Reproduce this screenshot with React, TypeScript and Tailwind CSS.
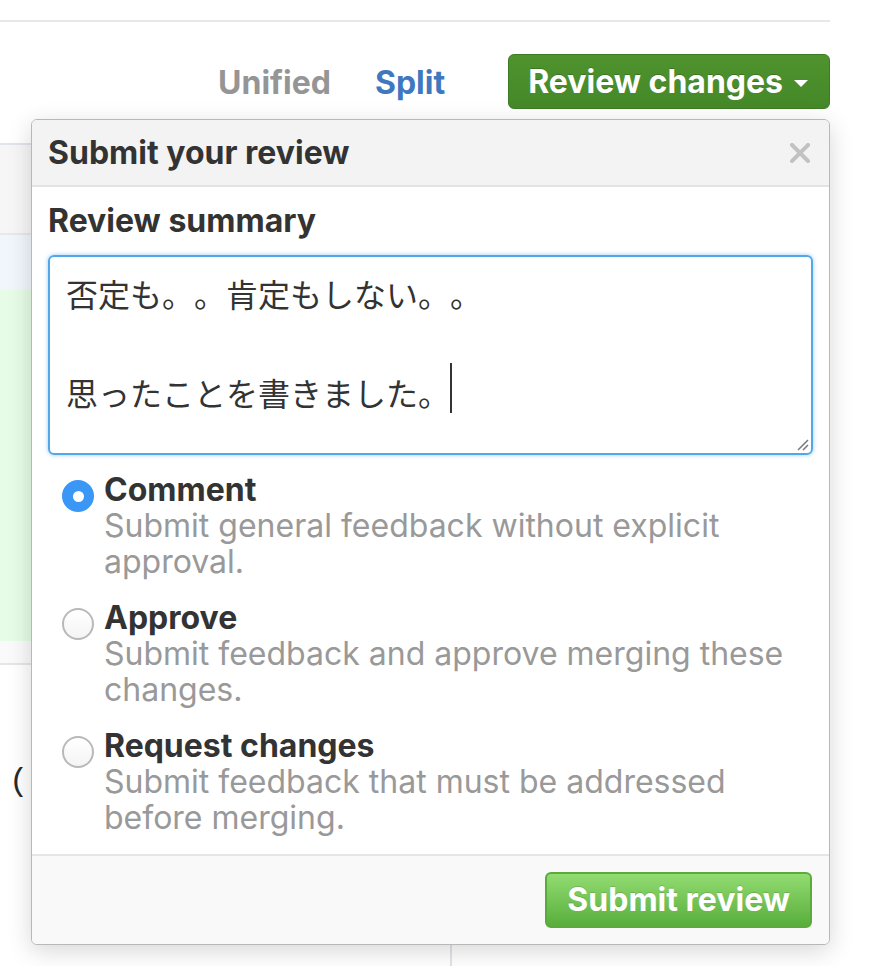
import { useState } from 'react';

type Choice = 'comment' | 'approve' | 'reject';

const options: { id: Choice; title: string; note: string }[] = [
  { id: 'comment', title: 'Comment', note: 'Submit general feedback without explicit approval.' },
  { id: 'approve', title: 'Approve', note: 'Submit feedback and approve merging these changes.' },
  { id: 'reject', title: 'Request changes', note: 'Submit feedback that must be addressed before merging.' },
];

function Radio({ checked }: { checked: boolean }) {
  if (checked) {
    return (
      <span className="mt-[8px] flex h-[32px] w-[32px] shrink-0 items-center justify-center rounded-full bg-[#3b97f6]">
        <span className="h-[11px] w-[11px] rounded-full bg-white" />
      </span>
    );
  }
  return (
    <span className="mt-[8px] h-[32px] w-[32px] shrink-0 rounded-full border-2 border-[#b9b9b9] bg-gradient-to-b from-white to-[#f4f4f4]" />
  );
}

export default function App() {
  const [choice, setChoice] = useState<Choice>('comment');

  return (
    <div className="relative h-[966px] w-[876px] overflow-hidden bg-white font-['Inter','Liberation_Sans',sans-serif] text-[#333]">
      {/* page behind the popover */}
      <div className="w-[830px]">
        <div className="h-[20px]" />
        <div className="h-[2px] bg-[#e8e8e8]" />
        <div className="flex h-[121px] items-start justify-end pt-[32px]">
          <span className="mt-[9px] text-[32px] font-bold leading-[40px] text-[#959595]">Unified</span>
          <span className="ml-[44px] mt-[9px] text-[32px] font-bold leading-[40px] text-[#4078c0]">Split</span>
          <button className="ml-[63px] flex h-[55px] items-center rounded-[6px] border border-[#3d7b24] bg-gradient-to-b from-[#4f932e] to-[#458829] pl-[19px] pr-[21px] text-[32px] font-bold text-white [text-shadow:0_-1px_0_rgba(0,0,0,0.2)]">
            Review changes
            <span className="ml-[11px] mt-[4px] h-0 w-0 border-x-[7px] border-t-[7px] border-x-transparent border-t-white" />
          </button>
        </div>
        <div className="h-[2px] bg-[#e1e4e8]" />
        <div className="h-[88px] bg-[#f6f6f6]" />
        <div className="h-[2px] bg-[#e6e8ea]" />
        <div className="h-[55px] bg-[#f1f6fd]" />
        <div className="h-[351px] bg-[#e6fce6]" />
        <div className="h-[22px] bg-[#fafafa]" />
        <div className="h-[2px] bg-[#e6e6e6]" />
        <div className="grid h-[302px] grid-cols-[452px_1fr]">
          <div className="border-r-2 border-[#e1e4e8] pl-[9px] pt-[97px] font-['Liberation_Mono',monospace] text-[32px] leading-[40px] text-[#24292e]">
            (
          </div>
          <div />
        </div>
      </div>

      {/* review popover */}
      <div className="absolute left-[31px] top-[119px] flex w-[799px] flex-col overflow-hidden rounded-[6px] border border-[#b8b8b8] bg-white shadow-[0_6px_24px_rgba(0,0,0,0.16)]">
        <div className="flex h-[67px] items-center justify-between border-b-2 border-[#e3e3e3] bg-[#f3f3f3] pl-[16px] pr-[19px]">
          <h3 className="text-[32px] font-bold">Submit your review</h3>
          <svg width="20" height="20" viewBox="0 0 20 20" className="mt-[1px]">
            <path d="M2 2 L18 18 M18 2 L2 18" stroke="#c2c2c2" strokeWidth="4" strokeLinecap="square" />
          </svg>
        </div>

        <div className="px-[16px] pt-[14px]">
          <div className="text-[32px] font-bold leading-[40px]">Review summary</div>
          <div className="relative mt-[14px] h-[200px] rounded-[6px] border-2 border-[#51a7e8] pl-[16px] pt-[12px] font-['Noto_Sans_CJK_JP',sans-serif] text-[32px] leading-[49.5px] text-[#333] shadow-[0_0_4px_rgba(81,167,232,0.6)] [text-spacing-trim:space-all]">
            <div>否定も。。肯定もしない。。</div>
            <div>&nbsp;</div>
            <div className="flex items-start">
              思ったことを書きました。
              <span className="mt-[-5px] h-[50px] w-[2px] bg-[#333]" />
            </div>
            <svg width="14" height="14" viewBox="0 0 14 14" className="absolute bottom-[2px] right-[2px]">
              <path d="M13 3 L3 13 M13 8 L8 13" stroke="#777" strokeWidth="1.5" />
            </svg>
          </div>

          <div className="mt-[17px]">
            {options.map((o, i) => (
              <label
                key={o.id}
                className={`flex cursor-pointer gap-[10px] pl-[14px] ${i === options.length - 1 ? 'mb-[18px]' : 'mb-[20px]'}`}
                onClick={() => setChoice(o.id)}
              >
                <Radio checked={choice === o.id} />
                <div>
                  <div className="text-[32px] font-bold leading-[36px]">{o.title}</div>
                  <div className="w-[680px] text-[32px] leading-[36px] text-[#999]">{o.note}</div>
                </div>
              </label>
            ))}
          </div>
        </div>

        <div className="flex justify-end border-t-2 border-[#e6e6e6] bg-[#f9f9f9] pb-[16px] pr-[17px] pt-[16px]">
          <button className="h-[56px] rounded-[6px] border-2 border-[#5aaa3c] bg-gradient-to-b from-[#92dc71] to-[#58ae3a] px-[20px] text-[32px] font-bold text-white [text-shadow:0_-1px_0_rgba(0,0,0,0.15)]">
            Submit review
          </button>
        </div>
      </div>
    </div>
  );
}
